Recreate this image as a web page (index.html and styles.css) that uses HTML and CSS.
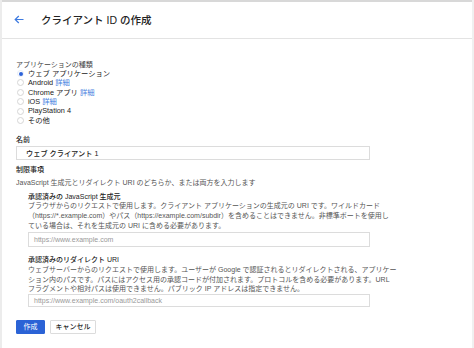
FILE: index.html
```html
<!DOCTYPE html>
<html lang="ja">
<head>
<meta charset="utf-8">
<title>クライアント ID の作成</title>
<link rel="stylesheet" href="styles.css">
</head>
<body>
<div class="page">
  <div class="top-band"></div>
  <header class="header">
    <svg class="back" width="10" height="9" viewBox="0 0 10 9" aria-hidden="true">
      <path d="M9.5 4.5H1.5M4.8 1L1.2 4.5L4.8 8" fill="none" stroke="#3d7ae0" stroke-width="1.2"/>
    </svg>
    <h1 class="title">クライアント ID の作成</h1>
  </header>
  <main class="main">
    <div class="type-label">アプリケーションの種類</div>
    <div class="radios">
      <div class="radio-row"><span class="radio checked"></span><span>ウェブ アプリケーション</span></div>
      <div class="radio-row"><span class="radio"></span><span>Android <a class="link">詳細</a></span></div>
      <div class="radio-row"><span class="radio"></span><span>Chrome アプリ <a class="link">詳細</a></span></div>
      <div class="radio-row"><span class="radio"></span><span>iOS <a class="link">詳細</a></span></div>
      <div class="radio-row"><span class="radio"></span><span>PlayStation 4</span></div>
      <div class="radio-row"><span class="radio"></span><span>その他</span></div>
    </div>
    <div class="field-label">名前</div>
    <div class="input name-input">ウェブ クライアント 1</div>
    <div class="field-label restrict">制限事項</div>
    <div class="hint">JavaScript 生成元とリダイレクト URI のどちらか、または両方を入力します</div>
    <section class="sub sub-js">
      <div class="sub-title">承認済みの JavaScript 生成元</div>
      <p class="desc">ブラウザからのリクエストで使用します。クライアント アプリケーションの生成元の URI です。ワイルドカード<br>（https://*.example.com）やパス（https://example.com/subdir）を含めることはできません。非標準ポートを使用し<br>ている場合は、それを生成元の URI に含める必要があります。</p>
      <div class="input sub-input">https://www.example.com</div>
    </section>
    <section class="sub sub-redirect">
      <div class="sub-title">承認済みのリダイレクト URI</div>
      <p class="desc desc2">ウェブサーバーからのリクエストで使用します。ユーザーが Google で認証されるとリダイレクトされる、アプリケー<br>ション内のパスです。パスにはアクセス用の承認コードが付加されます。プロトコルを含める必要があります。URL<br>フラグメントや相対パスは使用できません。パブリック IP アドレスは指定できません。</p>
      <div class="input sub-input input2">https://www.example.com/oauth2callback</div>
    </section>
    <div class="actions">
      <button class="btn btn-primary">作成</button>
      <button class="btn btn-secondary">キャンセル</button>
    </div>
  </main>
</div>
</body>
</html>
```

FILE: styles.css
```css
* { box-sizing: border-box; }
html, body { margin: 0; padding: 0; background: #fff; }
body {
  font-family: "Liberation Sans", "Noto Sans CJK JP", sans-serif;
  font-size: 7px;
  color: #333;
}
.page {
  width: 474px;
  height: 348px;
  border-left: 2px solid #ececec;
  border-right: 2px solid #f0f0f0;
  overflow: hidden;
}
.top-band { height: 2px; background: #d8d8d8; }
.header {
  height: 37px;
  border-bottom: 1px solid #e3e3e3;
  display: flex;
  align-items: center;
  padding-bottom: 1px;
}
.back { margin-left: 12px; flex: none; }
.title {
  margin: 0 0 0 17px;
  font-size: 10.5px;
  font-weight: 500;
  color: #222;
  line-height: 12px;
}
.main { padding: 20.5px 0 0 14px; }
.type-label { line-height: 9.4px; color: #444; }
.radio-row {
  display: flex;
  align-items: center;
  height: 9.4px;
  line-height: 9.4px;
  font-size: 7.3px;
  color: #222;
}
.radio {
  width: 7px;
  height: 7px;
  border-radius: 50%;
  border: 1px solid #d6d6d6;
  margin: 0 4px 0 1px;
  flex: none;
  display: flex;
  align-items: center;
  justify-content: center;
}
.radio.checked { border-color: #e6ecf8; }
.radio.checked::after {
  content: "";
  width: 4px;
  height: 4px;
  border-radius: 50%;
  background: #2c62d8;
}
.link { color: #4a7fe0; }
.field-label {
  margin-top: 9.4px;
  line-height: 9px;
  color: #222;
  font-weight: 500;
}
.input {
  border: 1px solid #dcdcdc;
  display: flex;
  align-items: center;
}
.name-input {
  margin-top: 2.5px;
  width: 354px;
  height: 14px;
  padding-left: 9px;
  color: #222;
  font-weight: 500;
  font-size: 7.2px;
}
.restrict { margin-top: 4.5px; }
.hint { margin-top: 4px; line-height: 9px; color: #555; }
.sub { padding-left: 12px; }
.sub-js { margin-top: 5px; }
.sub-title { line-height: 9px; color: #222; font-weight: 500; }
.desc {
  margin: 0.5px 0 0 0;
  line-height: 10px;
  color: #555;
}
.sub-input {
  width: 342px;
  height: 15px;
  margin-top: 1px;
  padding-left: 5px;
  color: #999;
}
.sub-redirect { margin-top: 7.5px; }
.desc2 { margin-top: 1.5px; line-height: 9.6px; }
.input2 { height: 13px; margin-top: 0; }
.actions {
  margin-top: 13px;
  display: flex;
  gap: 5px;
}
.btn {
  height: 14px;
  font-family: inherit;
  font-size: 7px;
  padding: 0;
  border-radius: 1px;
  line-height: 12px;
}
.btn-primary {
  width: 29px;
  background: #2b63d6;
  border: 1px solid #2b63d6;
  color: #fff;
}
.btn-secondary {
  width: 46px;
  background: #fff;
  border: 1px solid #dcdcdc;
  color: #222;
  font-weight: 500;
}
```
